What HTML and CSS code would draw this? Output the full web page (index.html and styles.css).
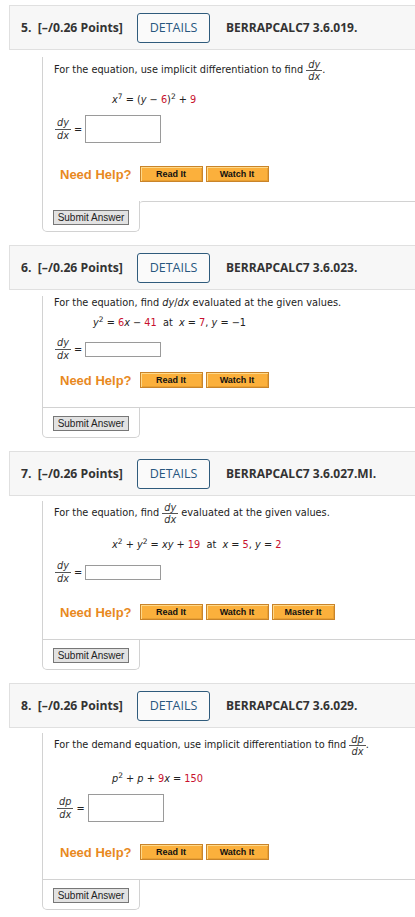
FILE: index.html
```html
<!DOCTYPE html>
<html>
<head>
<meta charset="utf-8">
<link rel="stylesheet" href="styles.css">
</head>
<body>

<div class="question q5">
  <div class="qhead">
    <span class="qnum">5.&nbsp; [–/0.26 Points]</span>
    <span class="details">DETAILS</span>
    <span class="qcode">BERRAPCALC7 3.6.019.</span>
  </div>
  <div class="content">
    <div class="line prompt">For the equation, use implicit differentiation to find <span class="frac"><span class="num">dy</span><span class="den">dx</span></span>.</div>
    <div class="line eq"><i>x</i><sup>7</sup> = (<i>y</i> − <span class="r">6</span>)<sup>2</sup> + <span class="r">9</span></div>
    <div class="row answer"><span class="frac big"><span class="num">dy</span><span class="den">dx</span></span><span class="equals">=</span><span class="input"></span></div>
    <div class="row help"><span class="need">Need Help?</span><span class="hbtn">Read It</span><span class="hbtn">Watch It</span></div>
  </div>
  <div class="submit-row">
    <div class="tab"><span class="submit">Submit Answer</span></div>
    <div class="filler"></div>
  </div>
</div>

<div class="question q6">
  <div class="qhead">
    <span class="qnum">6.&nbsp; [–/0.26 Points]</span>
    <span class="details">DETAILS</span>
    <span class="qcode">BERRAPCALC7 3.6.023.</span>
  </div>
  <div class="content">
    <div class="line prompt">For the equation, find <i>dy</i>/<i>dx</i> evaluated at the given values.</div>
    <div class="line eq"><i>y</i><sup>2</sup> = <span class="r">6</span><i>x</i> − <span class="r">41</span>&nbsp; at&nbsp; <i>x</i> = <span class="r">7</span>, <i>y</i> = −1</div>
    <div class="row answer"><span class="frac big"><span class="num">dy</span><span class="den">dx</span></span><span class="equals">=</span><span class="input"></span></div>
    <div class="row help"><span class="need">Need Help?</span><span class="hbtn">Read It</span><span class="hbtn">Watch It</span></div>
  </div>
  <div class="submit-row">
    <div class="tab"><span class="submit">Submit Answer</span></div>
  </div>
</div>

<div class="question q7">
  <div class="qhead">
    <span class="qnum">7.&nbsp; [–/0.26 Points]</span>
    <span class="details">DETAILS</span>
    <span class="qcode">BERRAPCALC7 3.6.027.MI.</span>
  </div>
  <div class="content">
    <div class="line prompt">For the equation, find <span class="frac"><span class="num">dy</span><span class="den">dx</span></span> evaluated at the given values.</div>
    <div class="line eq"><i>x</i><sup>2</sup> + <i>y</i><sup>2</sup> = <i>xy</i> + <span class="r">19</span>&nbsp; at&nbsp; <i>x</i> = <span class="r">5</span>, <i>y</i> = <span class="r">2</span></div>
    <div class="row answer"><span class="frac big"><span class="num">dy</span><span class="den">dx</span></span><span class="equals">=</span><span class="input"></span></div>
    <div class="row help"><span class="need">Need Help?</span><span class="hbtn">Read It</span><span class="hbtn">Watch It</span><span class="hbtn">Master It</span></div>
  </div>
  <div class="submit-row">
    <div class="tab"><span class="submit">Submit Answer</span></div>
  </div>
</div>

<div class="question q8">
  <div class="qhead">
    <span class="qnum">8.&nbsp; [–/0.26 Points]</span>
    <span class="details">DETAILS</span>
    <span class="qcode">BERRAPCALC7 3.6.029.</span>
  </div>
  <div class="content">
    <div class="line prompt">For the demand equation, use implicit differentiation to find <span class="frac"><span class="num">dp</span><span class="den">dx</span></span>.</div>
    <div class="line eq"><i>p</i><sup>2</sup> + <i>p</i> + <span class="r">9</span><i>x</i> = <span class="r">150</span></div>
    <div class="row answer"><span class="frac big"><span class="num">dp</span><span class="den">dx</span></span><span class="equals">=</span><span class="input"></span></div>
    <div class="row help"><span class="need">Need Help?</span><span class="hbtn">Read It</span><span class="hbtn">Watch It</span></div>
  </div>
  <div class="submit-row">
    <div class="tab"><span class="submit">Submit Answer</span></div>
  </div>
</div>

</body>
</html>
```

FILE: styles.css
```css
* { box-sizing: border-box; }

body {
  margin: 0;
  padding-top: 5px;
  background: #fff;
  font-family: "DejaVu Sans", Verdana, sans-serif;
  font-size: 9.75px;
  color: #222;
}

.question { margin-bottom: 13px; }

.qhead {
  margin-left: 9px;
  height: 45px;
  display: flex;
  align-items: center;
  background: #f7f7f7;
  border: 1px solid #e0e0e0;
  border-right: 0;
  font-family: "Open Sans", sans-serif;
  color: #333;
}
.qnum {
  width: 116px;
  margin-left: 11px;
  font-size: 12.2px;
  font-weight: 700;
  white-space: nowrap;
}
.details {
  width: 73px;
  height: 30px;
  display: flex;
  align-items: center;
  justify-content: center;
  border: 1px solid #2f5b7c;
  border-radius: 3px;
  background: #fafafa;
  color: #28577f;
  font-size: 12.5px;
}
.qcode {
  margin-left: 16px;
  font-size: 12px;
  font-weight: 700;
  white-space: nowrap;
}

.content {
  margin-left: 42px;
  padding: 0 0 19px 11px;
  border-left: 1px solid #d2d2d2;
  border-bottom: 1px solid #d2d2d2;
}
.q5 .content { border-bottom: 0; }

.line { display: block; white-space: nowrap; }
.row { display: flex; align-items: center; white-space: nowrap; }

i { font-style: italic; }
.r { color: #c8102e; }
sup { font-size: 7.5px; line-height: 0; vertical-align: 4px; }

.frac {
  display: inline-flex;
  flex-direction: column;
  align-items: center;
  vertical-align: middle;
  font-style: italic;
  line-height: 11px;
  color: #333;
}
.frac .num { border-bottom: 1px solid #555; padding: 0 2px; }
.frac.big { line-height: 12px; margin-left: 1px; }

.equals { margin: 0 3px 0 3px; }

.input {
  display: block;
  width: 76px;
  height: 15px;
  border: 1px solid #9a9a9a;
  background: #fff;
}

.help { padding-left: 6px; }
.need {
  font-family: "Liberation Sans", Arial, sans-serif;
  font-weight: 700;
  font-size: 13px;
  color: #e8891e;
  margin-right: 8px;
}
.hbtn {
  width: 63px;
  height: 16px;
  margin-right: 3px;
  display: flex;
  align-items: center;
  justify-content: center;
  font-family: "Liberation Sans", Arial, sans-serif;
  font-weight: 700;
  font-size: 9px;
  color: #111;
  background: #fbb03c;
  border: 1px solid #c9842a;
  box-shadow: inset 1px 1px 0 #fed98a, inset -1px -1px 0 #e9a032;
}

.submit-row { display: flex; margin-left: 42px; }
.tab {
  width: 98px;
  padding: 8px 0 6px 10px;
  border: 1px solid #d2d2d2;
  border-top: 0;
  border-radius: 0 0 5px 5px;
}
.q5 .tab { padding-top: 9px; }
.filler {
  flex: 1;
  border-top: 1px solid #d2d2d2;
  border-top-left-radius: 3px;
}
.submit {
  display: flex;
  align-items: center;
  justify-content: center;
  width: 76px;
  height: 15px;
  background: #e2e2e2;
  border: 1px solid #777;
  font-family: "Liberation Sans", Arial, sans-serif;
  font-size: 10px;
  color: #222;
}

/* question 5 */
.q5 .prompt { margin-top: 7px; line-height: 26px; height: 26px; }
.q5 .eq { margin-top: 10px; line-height: 14px; height: 14px; padding-left: 58px; }
.q5 .answer { margin-top: 8px; height: 28px; }
.q5 .input { height: 28px; }
.q5 .help { margin-top: 23px; height: 16px; }

/* question 6 */
.q6 .prompt { margin-top: 6px; line-height: 14px; height: 14px; }
.q6 .eq { margin-top: 6px; line-height: 14px; height: 14px; padding-left: 39px; }
.q6 .answer { margin-top: 9px; height: 20px; }
.q6 .help { margin-top: 13px; height: 16px; }

/* question 7 */
.q7 .prompt { margin-top: 5px; line-height: 24px; height: 24px; }
.q7 .eq { margin-top: 13px; line-height: 14px; height: 14px; padding-left: 58px; }
.q7 .answer { margin-top: 9px; height: 22px; }
.q7 .help { margin-top: 21px; height: 16px; }

/* question 8 */
.q8 .prompt { margin-top: 5px; line-height: 24px; height: 24px; }
.q8 .eq { margin-top: 15px; line-height: 14px; height: 14px; padding-left: 58px; }
.q8 .answer { margin-top: 8px; height: 28px; }
.q8 .answer .frac { margin-left: 3px; }
.q8 .input { height: 28px; }
.q8 .help { margin-top: 22px; height: 16px; }
```
